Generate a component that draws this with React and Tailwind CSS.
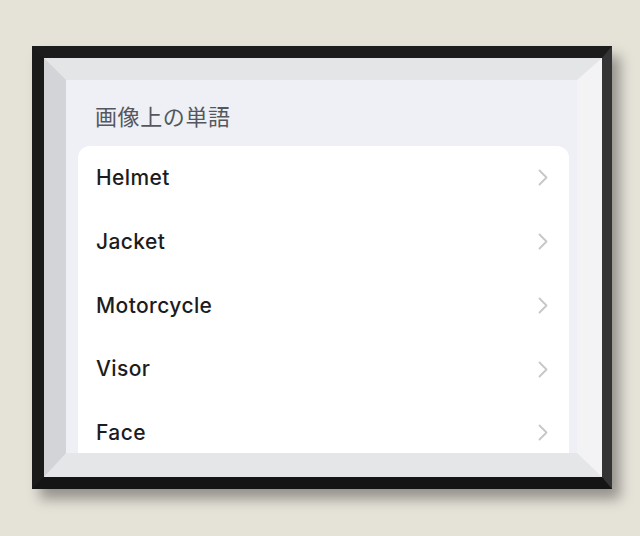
const WORDS = ['Helmet', 'Jacket', 'Motorcycle', 'Visor', 'Face'];

function Chevron() {
    return (
        <svg width="10" height="17" viewBox="0 0 10 17" fill="none">
            <path d="M1.5 1.5 L8.5 8.5 L1.5 15.5" stroke="#c7c7cb" strokeWidth="1.8" strokeLinecap="round" strokeLinejoin="round" />
        </svg>
    );
}

export default function App() {
    return (
        <div
            className="w-[640px] h-[536px] bg-[#e5e2d8] pt-[46px] pl-[32px] overflow-hidden"
            style={{ fontFamily: 'Inter, "Noto Sans CJK JP", sans-serif' }}
        >
            {/* Frame */}
            <div className="w-[580px] h-[443px] border-[12px] border-r-[10px] border-t-[#1c1c1c] border-l-[#1a1a1a] border-b-[#151515] border-r-[#343434] shadow-[8px_10px_12px_rgba(0,0,0,0.35)]">
                {/* Mat bevel */}
                <div className="w-full h-full border-t-[22px] border-l-[22px] border-r-[25px] border-b-[24px] border-t-[#e4e5e7] border-l-[#d3d4d7] border-r-[#f3f3f5] border-b-[#e5e6e8]">
                    <div className="w-full h-full bg-[#eef0f5] overflow-hidden pl-[12px] pr-[8px]">
                        <h2 className="pl-[17px] pt-[24px] h-[66px] text-[22px] leading-[26px] tracking-[0.6px] text-[#54575e]">
                            画像上の単語
                        </h2>
                        <div className="bg-white rounded-[12px]">
                            {WORDS.map((word) => (
                                <div key={word} className="h-[63.75px] flex items-center justify-between pl-[18px] pr-[21px]">
                                    <span className="text-[21px] font-medium text-[#1c1c1e] tracking-[0.4px]">{word}</span>
                                    <Chevron />
                                </div>
                            ))}
                        </div>
                    </div>
                </div>
            </div>
        </div>
    );
}
